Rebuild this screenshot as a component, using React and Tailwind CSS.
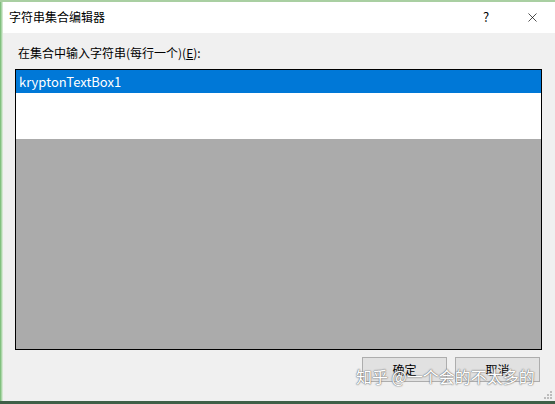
import { X } from "lucide-react"

const font = { fontFamily: '"Microsoft YaHei", "Noto Sans CJK SC", "Noto Sans", sans-serif' }

const App = () => {
    return (
        <div className='w-[555px] h-[404px] flex flex-col bg-[#f0f0f0] overflow-hidden relative text-[12px] text-black' style={font}>
            <div className='h-[2px] bg-[#a9cfa2]'></div>
            <div className='flex flex-1'>
                <div className='w-[3px] bg-gradient-to-r from-[#6cb66a] to-[#e6f2e4]'></div>
                <div className='flex-1 flex flex-col'>
                    {/* title bar */}
                    <div className='h-[31px] bg-white flex items-center justify-between'>
                        <span className='pl-[6px] pb-[2px]'>字符串集合编辑器</span>
                        <div className='flex items-center h-full'>
                            <span className='w-[46px] text-center text-[13px] pb-[2px]'>?</span>
                            <div className='w-[46px] flex justify-center'>
                                <X size={15} strokeWidth={1.1} />
                            </div>
                        </div>
                    </div>

                    {/* body */}
                    <div className='flex-1 flex flex-col pl-[12px] pr-[13px]'>
                        <div className='h-[36px] flex items-center pl-[3px] pt-[3px]'>
                            在集合中输入字符串(每行一个)(<span className='underline'>E</span>):
                        </div>
                        <div className='h-[281px] border border-black bg-[#ababab] flex flex-col'>
                            <div className='h-[69px] bg-white'>
                                <div className='h-[23px] bg-[#0078d7] text-white text-[13px] flex items-center pl-[3px]'>kryptonTextBox1</div>
                            </div>
                        </div>
                        <div className='flex justify-end gap-[8px] pt-[7px] pr-[2px]'>
                            <button className='w-[85px] h-[25px] border border-[#adadad] bg-[#e1e1e1]'>确定</button>
                            <button className='w-[85px] h-[25px] border border-[#adadad] bg-[#e1e1e1]'>取消</button>
                        </div>
                    </div>
                </div>
            </div>
            <div className='h-[3px] bg-[#3f5f47]'></div>

            {/* watermark */}
            <div className='absolute left-[356px] top-[364px] text-[16px] text-white' style={{ textShadow: '0 0 1px #777, 0 0 1px #777, 0 0 2px #999' }}>
                知乎 @一个会的不太多的
            </div>

            {/* size grip */}
            <div className='absolute right-[3px] bottom-[5px] grid grid-cols-3 gap-[1px]'>
                <span></span><span></span><span className='w-[2px] h-[2px] bg-[#bcbcbc]'></span>
                <span></span><span className='w-[2px] h-[2px] bg-[#bcbcbc]'></span><span className='w-[2px] h-[2px] bg-[#bcbcbc]'></span>
                <span className='w-[2px] h-[2px] bg-[#bcbcbc]'></span><span className='w-[2px] h-[2px] bg-[#bcbcbc]'></span><span className='w-[2px] h-[2px] bg-[#bcbcbc]'></span>
            </div>
        </div>
    )
}

export default App
